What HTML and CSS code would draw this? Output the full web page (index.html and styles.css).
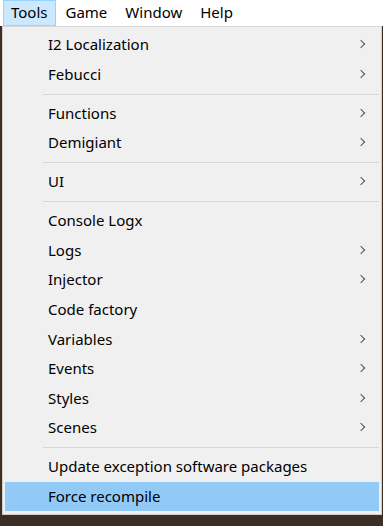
FILE: index.html
```html
<!DOCTYPE html>
<html lang="en">
<head>
  <meta charset="UTF-8" />
  <title>Tools menu</title>
  <link rel="stylesheet" href="styles.css">
</head>
<body>
  <nav class="menubar">
    <div class="top-item active">Tools</div>
    <div class="top-item">Game</div>
    <div class="top-item">Window</div>
    <div class="top-item">Help</div>
  </nav>

  <ul class="dropdown">
    <li class="item sub">I2 Localization</li>
    <li class="item sub">Febucci</li>
    <li class="sep"></li>
    <li class="item sub">Functions</li>
    <li class="item sub">Demigiant</li>
    <li class="sep"></li>
    <li class="item sub">UI</li>
    <li class="sep"></li>
    <li class="item">Console Logx</li>
    <li class="item sub">Logs</li>
    <li class="item sub">Injector</li>
    <li class="item">Code factory</li>
    <li class="item sub">Variables</li>
    <li class="item sub">Events</li>
    <li class="item sub">Styles</li>
    <li class="item sub">Scenes</li>
    <li class="sep"></li>
    <li class="item">Update exception software packages</li>
    <li class="item hover">Force recompile</li>
  </ul>
</body>
</html>
```

FILE: styles.css
```css
body {
  margin: 0;
  height: 526px;
  background-color: #3b2e23;
  font-family: 'Noto Sans', 'Open Sans', sans-serif;
  font-size: 15px;
  color: #000;
  overflow: hidden;
}

.menubar {
  display: flex;
  align-items: center;
  height: 26px;
  background-color: #fff;
  padding-left: 3px;
}

.top-item {
  height: 24px;
  line-height: 23px;
  padding: 0 7px;
  border: 1px solid transparent;
  margin-right: 2px;
}

.top-item.active {
  background-color: #cce8ff;
  border-color: #99d1ff;
}

.dropdown {
  list-style: none;
  margin: 0 1px 0 2px;
  padding: 3px 2px 3px 2px;
  background-color: #f0f0f0;
  border: 1px solid #cfcfcf;
  border-top-color: #d9d9d9;
}

.item {
  position: relative;
  height: 29.6px;
  line-height: 29.6px;
  padding-left: 43px;
}

.item.sub::after {
  content: "";
  position: absolute;
  right: 15px;
  top: 11px;
  width: 5px;
  height: 5px;
  border-right: 1.5px solid #555;
  border-bottom: 1.5px solid #555;
  transform: rotate(-45deg);
}

.item.hover {
  background-color: #91c9f7;
}

.sep {
  height: 1px;
  margin: 4.5px 0 3.9px 38px;
  background-color: #d7d7d7;
}
```
